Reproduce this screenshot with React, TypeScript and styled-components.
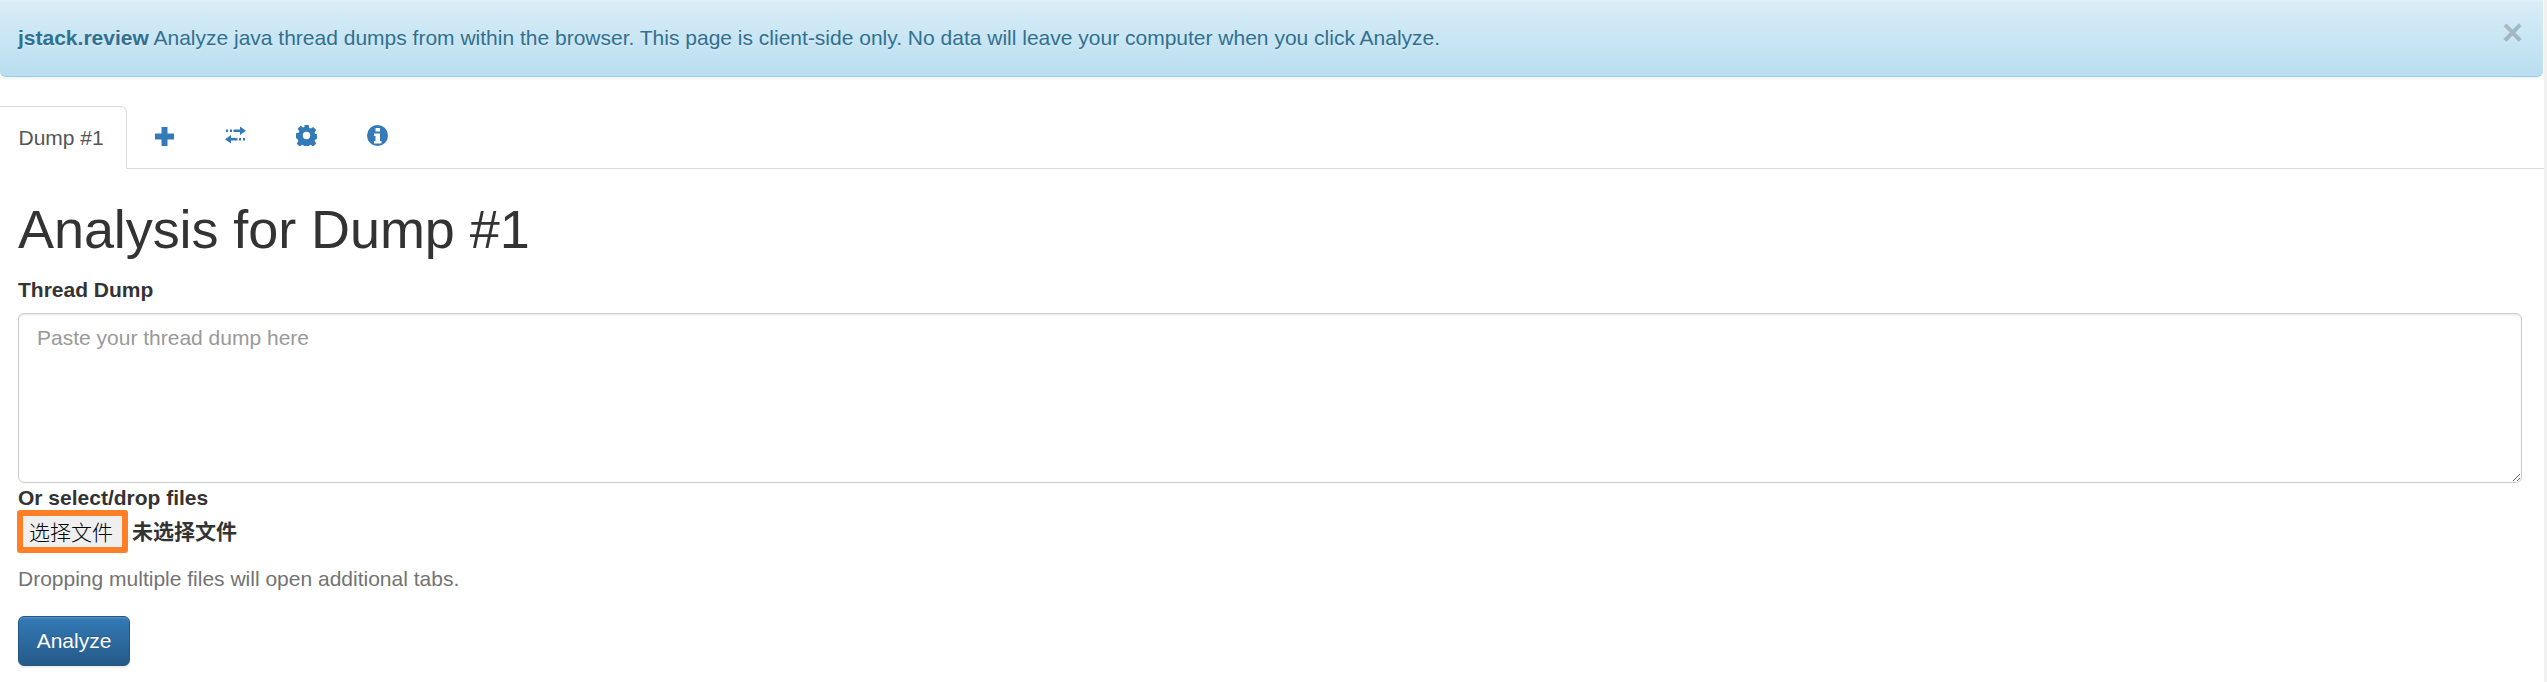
import React from "react";
import styled, { createGlobalStyle } from "styled-components";

const Global = createGlobalStyle`
  html, body { margin: 0; padding: 0; background: #f1f1f1; }
  body { font-family: "Liberation Sans", Arial, sans-serif; font-size: 21px; line-height: 30px; color: #333; overflow: hidden; }
  * { box-sizing: border-box; }
`;

const Page = styled.div`
  width: 2544px;
  height: 682px;
  background: #fff;
`;

const Alert = styled.div`
  position: relative;
  width: 2543px;
  height: 76.500px;
  padding: 22.500px 45px 0 18px;
  color: #31708f;
  background: linear-gradient(to bottom, #d9edf7 0, #b9def0 100%);
  border-bottom: 1.500px solid #9acfea;
  border-radius: 0 0 6px 6px;
  box-shadow: inset 0 1.500px 0 rgba(255, 255, 255, 0.25), 0 1.500px 3px rgba(0, 0, 0, 0.05);
  text-shadow: 0 1.500px 0 rgba(255, 255, 255, 0.2);
`;

const Brand = styled.strong`
  font-weight: 700;
`;

const Close = styled.span`
  position: absolute;
  top: 18px;
  right: 20px;
  font-size: 36px;
  line-height: 30px;
  font-weight: 700;
  color: #000;
  opacity: 0.2;
  text-shadow: 0 1.500px 0 #fff;
`;

const Tabs = styled.nav`
  display: flex;
  align-items: stretch;
  height: 63px;
  margin-top: 29.500px;
  border-bottom: 1.500px solid #ddd;
`;

const ActiveTab = styled.div`
  display: flex;
  align-items: center;
  width: 127px;
  height: 63px;
  padding-left: 18.500px;
  background: #fff;
  border: 1.500px solid #ddd;
  border-left: 0;
  border-bottom-color: #fff;
  border-radius: 0 6px 0 0;
  color: #555;
`;

const IconTab = styled.div`
  width: 71px;
  display: flex;
  align-items: center;
  justify-content: center;
  padding: 0 0 3px 3px;
`;

const Content = styled.main`
  padding: 0 22px 0 18px;
`;

const Title = styled.h1`
  margin: 31px 0 0;
  font-size: 54px;
  line-height: 59.400px;
  font-weight: 500;
  letter-spacing: -0.08px;
  color: #333;
`;

const FieldLabel = styled.label`
  display: block;
  font-weight: 700;
`;

const DumpLabel = styled(FieldLabel)`
  margin-top: 16px;
`;

const DumpInput = styled.textarea`
  display: block;
  width: 100%;
  height: 170px;
  margin-top: 7.500px;
  padding: 9px 18px;
  font-family: "Liberation Sans", Arial, sans-serif;
  font-size: 21px;
  line-height: 30px;
  color: #555;
  background: #fff;
  border: 1.500px solid #ccc;
  border-radius: 6px;
  box-shadow: inset 0 1.500px 1.500px rgba(0, 0, 0, 0.075);
  outline: none;
  &::placeholder { color: #999; opacity: 1; }
`;

const FileRow = styled.div`
  display: flex;
  align-items: center;
  height: 43px;
  margin: -2.500px 0 0 -1px;
`;

const FileButton = styled.button`
  width: 111px;
  height: 43px;
  padding: 0 3px 3px 0;
  font-family: "Liberation Sans", "Noto Sans CJK SC", sans-serif;
  font-size: 21px;
  font-weight: 300;
  color: #000;
  background: #efefef;
  border: 6px solid #ff7f27;
  border-radius: 3px;
`;

const FileName = styled.span`
  margin-left: 4px;
  font-weight: 700;
  font-family: "Liberation Sans", "Noto Sans CJK SC", sans-serif;
`;

const Help = styled.p`
  margin: 11px 0 0;
  color: #737373;
`;

const AnalyzeButton = styled.button`
  display: block;
  width: 112px;
  height: 50px;
  margin-top: 22px;
  padding: 0;
  color: #fff;
  font-family: "Liberation Sans", Arial, sans-serif;
  font-size: 21px;
  background: linear-gradient(to bottom, #337ab7 0, #265a88 100%);
  border: 1.500px solid #245580;
  border-radius: 6px;
  text-shadow: 0 -1.500px 0 rgba(0, 0, 0, 0.2);
  box-shadow: inset 0 1.500px 0 rgba(255, 255, 255, 0.15), 0 1.500px 1.500px rgba(0, 0, 0, 0.075);
`;

const Glyph = styled.svg`
  width: 21px;
  height: 21px;
  fill: #337ab7;
  display: block;
`;

const Plus = () => (
  <Glyph viewBox="0 -1 21 21"><path d="M7.500 1h6v6.500H20v6h-6.500V20h-6v-6.500H1v-6h6.500z" /></Glyph>
);
const Transfer = () => (
  <Glyph viewBox="0 0 21 21">
    <path d="M1 4.500h2v2.500H1zM5 4.500h2v2.500H5zM8.500 4.500h6.500V1.500l6 4.250-6 4.250V7H8.500zM20 13h-2v2.500h2zM16 13h-2v2.500h2zM12.500 13H6v-3L0 14.250l6 4.250v-3h6.500z" />
  </Glyph>
);
const Gear = () => (
  <Glyph viewBox="0 0 21 21">
    <path fillRule="evenodd" d="M8.300 0h4.400l.5 2.900 1.600.7 2.400-1.700 3.100 3.100-1.700 2.400.7 1.600 2.700.5v4.400l-2.700.5-.7 1.600 1.700 2.400-3.100 3.100-2.400-1.700-1.600.7-.5 2.700H8.300l-.5-2.700-1.600-.7-2.400 1.700-3.100-3.100 1.700-2.400-.7-1.600L-.3 12.700V8.300l2.900-.5.7-1.600L1.600 3.800l3.100-3.100 2.400 1.700 1.600-.7zM10.500 6.800a3.700 3.700 0 1 0 0 7.400 3.700 3.700 0 0 0 0-7.400z" />
  </Glyph>
);
const Info = () => (
  <Glyph viewBox="0 0 21 21">
    <path fillRule="evenodd" d="M10.500 0a10.500 10.500 0 1 1 0 21 10.500 10.500 0 0 1 0-21zM8.500 3v3.500h4.500V3zM7 8.500v2.500h1.500v5H7v2.500h7.500V16H13V8.500z" />
  </Glyph>
);

export default function App() {
  return (
    <Page>
      <Global />
      <Alert>
        <Brand>jstack.review</Brand> Analyze java thread dumps from within the browser. This page is client-side only. No data will leave your computer when you click Analyze.
        <Close>×</Close>
      </Alert>
      <Tabs>
        <ActiveTab>Dump #1</ActiveTab>
        <IconTab><Plus /></IconTab>
        <IconTab><Transfer /></IconTab>
        <IconTab><Gear /></IconTab>
        <IconTab><Info /></IconTab>
      </Tabs>
      <Content>
        <Title>Analysis for Dump #1</Title>
        <DumpLabel>Thread Dump</DumpLabel>
        <DumpInput placeholder="Paste your thread dump here" />
        <FieldLabel>Or select/drop files</FieldLabel>
        <FileRow>
          <FileButton type="button">选择文件</FileButton>
          <FileName>未选择文件</FileName>
        </FileRow>
        <Help>Dropping multiple files will open additional tabs.</Help>
        <AnalyzeButton type="button">Analyze</AnalyzeButton>
      </Content>
    </Page>
  );
}
